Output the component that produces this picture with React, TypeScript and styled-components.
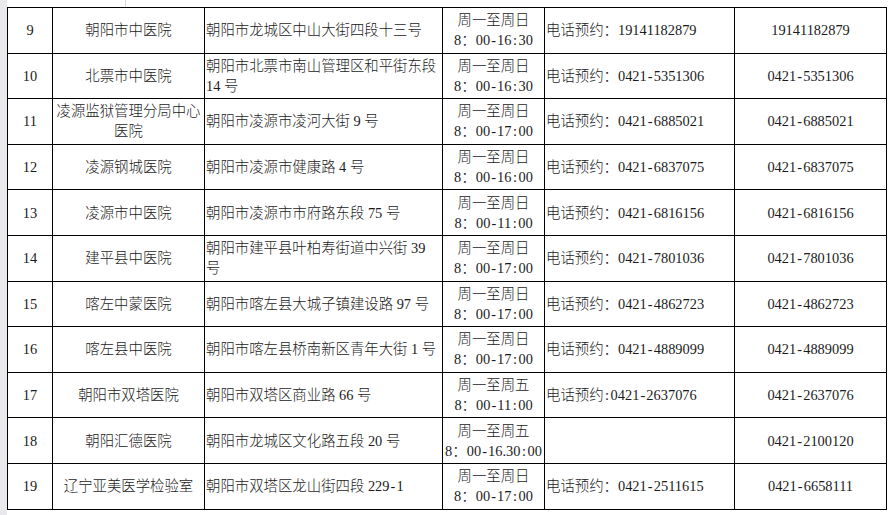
import React from 'react';
import styled, { createGlobalStyle } from 'styled-components';

type Clinic = {
  no: string;
  name: string[];
  addr: string[];
  days: string;
  time: string;
  book: string;
  tel: string;
};

const clinics: Clinic[] = [
  { no: '9', name: ['朝阳市中医院'], addr: ['朝阳市龙城区中山大街四段十三号'], days: '周一至周日', time: '8：00-16:30', book: '电话预约：19141182879', tel: '19141182879' },
  { no: '10', name: ['北票市中医院'], addr: ['朝阳市北票市南山管理区和平街东段', '14 号'], days: '周一至周日', time: '8：00-16:30', book: '电话预约：0421-5351306', tel: '0421-5351306' },
  { no: '11', name: ['凌源监狱管理分局中心', '医院'], addr: ['朝阳市凌源市凌河大街 9 号'], days: '周一至周日', time: '8：00-17:00', book: '电话预约：0421-6885021', tel: '0421-6885021' },
  { no: '12', name: ['凌源钢城医院'], addr: ['朝阳市凌源市健康路 4 号'], days: '周一至周日', time: '8：00-16:00', book: '电话预约：0421-6837075', tel: '0421-6837075' },
  { no: '13', name: ['凌源市中医院'], addr: ['朝阳市凌源市市府路东段 75 号'], days: '周一至周日', time: '8：00-11:00', book: '电话预约：0421-6816156', tel: '0421-6816156' },
  { no: '14', name: ['建平县中医院'], addr: ['朝阳市建平县叶柏寿街道中兴街 39', '号'], days: '周一至周日', time: '8：00-17:00', book: '电话预约：0421-7801036', tel: '0421-7801036' },
  { no: '15', name: ['喀左中蒙医院'], addr: ['朝阳市喀左县大城子镇建设路 97 号'], days: '周一至周日', time: '8：00-17:00', book: '电话预约：0421-4862723', tel: '0421-4862723' },
  { no: '16', name: ['喀左县中医院'], addr: ['朝阳市喀左县桥南新区青年大街 1 号'], days: '周一至周日', time: '8：00-17:00', book: '电话预约：0421-4889099', tel: '0421-4889099' },
  { no: '17', name: ['朝阳市双塔医院'], addr: ['朝阳市双塔区商业路 66 号'], days: '周一至周五', time: '8：00-11:00', book: '电话预约:0421-2637076', tel: '0421-2637076' },
  { no: '18', name: ['朝阳汇德医院'], addr: ['朝阳市龙城区文化路五段 20 号'], days: '周一至周五', time: '8：00-16.30:00', book: '', tel: '0421-2100120' },
  { no: '19', name: ['辽宁亚美医学检验室'], addr: ['朝阳市双塔区龙山街四段 229-1'], days: '周一至周日', time: '8：00-17:00', book: '电话预约：0421-2511615', tel: '0421-6658111' },
];

const GlobalStyle = createGlobalStyle`
  html, body {
    margin: 0;
    padding: 0;
    background: #fff;
  }
`;

const Page = styled.div`
  display: flex;
  width: 894px;
  height: 515px;
  overflow: hidden;
  background: #fff;
`;

const Gutter = styled.div`
  width: 7px;
  flex-shrink: 0;
  background: #e9e9ec;
`;

const Sheet = styled.div`
  display: flex;
  flex-direction: column;
`;

const TopBand = styled.div`
  height: 7px;
  padding-left: 118px;
  display: flex;
`;

const Tick = styled.div`
  width: 1px;
  background: #d6d6d6;
`;

const Table = styled.table`
  border-collapse: collapse;
  table-layout: fixed;
  width: 879px;
  font-family: 'Liberation Serif', 'Noto Sans CJK SC', serif;
  font-size: 14.4px;
  font-weight: 300;
  line-height: 20px;
  color: #1a1a1a;
`;

const Row = styled.tr`
  height: 45.6px;
`;

const Cell = styled.td<{ $align?: 'left' | 'center' }>`
  border: 1px solid #000;
  padding: 0 ${(p) => (p.$align === 'left' ? '1px' : '0')};
  text-align: ${(p) => p.$align || 'center'};
  vertical-align: middle;
  white-space: nowrap;
  overflow: hidden;
`;

const Line = styled.div``;

/* half-width punctuation in the source font is as wide as a digit */
const Glyph = styled.span`
  display: inline-block;
  width: 7px;
  text-align: center;
`;

const colWidths = [45, 152, 238, 102, 190, 152];

function Mono({ text }: { text: string }) {
  const parts = text.split(/([-:])/);
  return (
    <>
      {parts.map((p, i) => (p === '-' || p === ':' ? <Glyph key={i}>{p}</Glyph> : p))}
    </>
  );
}

export default function App() {
  return (
    <Page>
      <GlobalStyle />
      <Gutter />
      <Sheet>
        <TopBand>
          <Tick />
        </TopBand>
        <Table>
          <colgroup>
            {colWidths.map((w, i) => (
              <col key={i} style={{ width: w }} />
            ))}
          </colgroup>
          <tbody>
            {clinics.map((c) => (
              <Row key={c.no}>
                <Cell>{c.no}</Cell>
                <Cell>
                  {c.name.map((l) => (
                    <Line key={l}>{l}</Line>
                  ))}
                </Cell>
                <Cell $align="left">
                  {c.addr.map((l) => (
                    <Line key={l}>
                      <Mono text={l} />
                    </Line>
                  ))}
                </Cell>
                <Cell>
                  <Line>{c.days}</Line>
                  <Line>
                    <Mono text={c.time} />
                  </Line>
                </Cell>
                <Cell $align="left">
                  <Mono text={c.book} />
                </Cell>
                <Cell>
                  <Mono text={c.tel} />
                </Cell>
              </Row>
            ))}
          </tbody>
        </Table>
      </Sheet>
    </Page>
  );
}
